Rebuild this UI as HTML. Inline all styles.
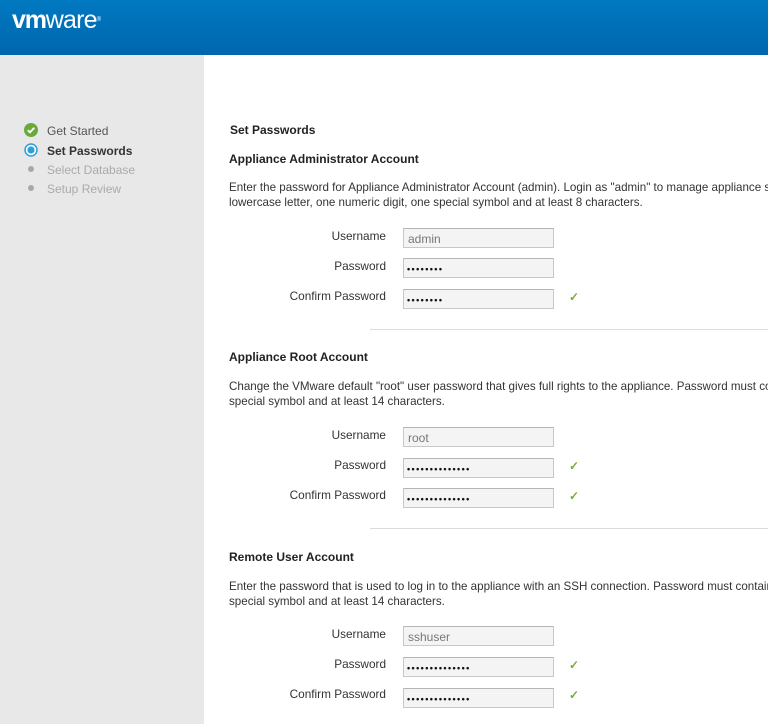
<!DOCTYPE html>
<html><head><meta charset="utf-8"><style>
*{margin:0;padding:0;box-sizing:border-box}
html,body{width:768px;height:724px;overflow:hidden;background:#fff;font-family:"Liberation Sans",Arial,sans-serif;color:#333;font-size:12px}
.wrap{position:absolute;left:0;top:0;width:768px;height:724px;overflow:hidden}
.hdr{position:absolute;left:0;top:0;width:768px;height:55px;background:linear-gradient(180deg,#0079c1 0%,#0066ad 100%)}
.logo{position:absolute;left:12px;top:5px;color:#fff;font-size:25px;letter-spacing:-0.8px;line-height:30px}
.logo b{font-weight:bold;letter-spacing:-1.2px}
.side{position:absolute;left:0;top:55px;width:204px;height:669px;background:#e8e8e8}
.step{position:absolute;left:47px;font-size:12px;line-height:14px;white-space:nowrap}
.t{position:absolute;white-space:nowrap;line-height:15px;font-size:11.6px}
.h{font-weight:bold;color:#222;font-size:12px}
.lbl{position:absolute;right:382px;white-space:nowrap;color:#333;line-height:14px;font-size:11.8px}
.in{position:absolute;left:403px;width:151px;height:20px;background:#f4f4f4;border:1px solid #c8c8c8;border-top-color:#b5b5b5;font-size:12px;color:#777;padding:3px 0 0 4px;overflow:hidden}
.in.p{color:#111;font-size:9px;letter-spacing:1.4px;padding-top:4px;padding-left:3px;font-weight:bold;line-height:12px}
.ck{position:absolute;left:569px;color:#7aab3a;font-size:12px;font-weight:bold}
.hr{position:absolute;left:370px;width:398px;height:1px;background:#dcdcdc}
</style></head><body><div class="wrap">
<div class="hdr"><div class="logo"><b>vm</b>ware<span style="font-size:6px;vertical-align:top">®</span></div></div>
<div class="side">
<svg style="position:absolute;left:24px;top:68px" width="14" height="14"><circle cx="7" cy="7" r="7" fill="#6aaa3a"/><path d="M3.8 7.2 L6 9.3 L10.3 4.8" stroke="#fff" stroke-width="1.8" fill="none"/></svg>
<div class="step" style="top:69px;color:#555">Get Started</div>
<svg style="position:absolute;left:24px;top:88px" width="14" height="14"><circle cx="7" cy="7" r="6" fill="#fff" stroke="#2f9fd8" stroke-width="1.5"/><circle cx="7" cy="7" r="3.6" fill="#2f9fd8"/></svg>
<div class="step" style="top:89px;font-weight:bold;color:#333">Set Passwords</div>
<div style="position:absolute;left:28px;top:111px;width:6px;height:6px;border-radius:3px;background:#a8a8a8"></div>
<div class="step" style="top:108px;color:#aaa">Select Database</div>
<div style="position:absolute;left:28px;top:130px;width:6px;height:6px;border-radius:3px;background:#a8a8a8"></div>
<div class="step" style="top:127px;color:#aaa">Setup Review</div>
</div>

<div class="t h" style="left:230px;top:123px">Set Passwords</div>
<div class="t h" style="left:229px;top:152px">Appliance Administrator Account</div>
<div class="t" style="left:229px;top:180px">Enter the password for Appliance Administrator Account (admin). Login as "admin" to manage appliance settings. Password must contain<br>lowercase letter, one numeric digit, one special symbol and at least 8 characters.</div>
<div class="lbl" style="top:229px">Username</div><div class="in" style="top:228px">admin</div>
<div class="lbl" style="top:259px">Password</div><div class="in p" style="top:258px">••••••••</div>
<div class="lbl" style="top:289px">Confirm Password</div><div class="in p" style="top:289px">••••••••</div><div class="ck" style="top:290px">✓</div>
<div class="hr" style="top:329px"></div>

<div class="t h" style="left:229px;top:350px">Appliance Root Account</div>
<div class="t" style="left:229px;top:379px">Change the VMware default "root" user password that gives full rights to the appliance. Password must contain : At least one<br>special symbol and at least 14 characters.</div>
<div class="lbl" style="top:428px">Username</div><div class="in" style="top:427px">root</div>
<div class="lbl" style="top:458px">Password</div><div class="in p" style="top:458px">••••••••••••••</div><div class="ck" style="top:459px">✓</div>
<div class="lbl" style="top:488px">Confirm Password</div><div class="in p" style="top:488px">••••••••••••••</div><div class="ck" style="top:489px">✓</div>
<div class="hr" style="top:528px"></div>

<div class="t h" style="left:229px;top:550px">Remote User Account</div>
<div class="t" style="left:229px;top:579px">Enter the password that is used to log in to the appliance with an SSH connection. Password must contain : At least one<br>special symbol and at least 14 characters.</div>
<div class="lbl" style="top:627px">Username</div><div class="in" style="top:626px">sshuser</div>
<div class="lbl" style="top:657px">Password</div><div class="in p" style="top:657px">••••••••••••••</div><div class="ck" style="top:658px">✓</div>
<div class="lbl" style="top:687px">Confirm Password</div><div class="in p" style="top:688px">••••••••••••••</div><div class="ck" style="top:688px">✓</div>
</div></body></html>
